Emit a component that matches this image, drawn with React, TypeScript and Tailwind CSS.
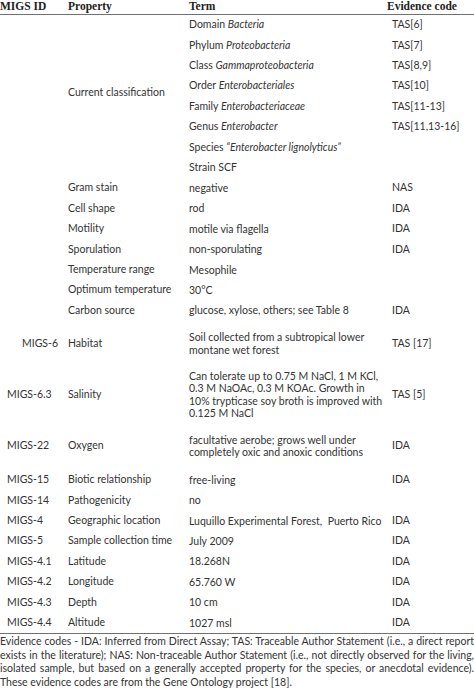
import type { ReactNode } from "react";

interface Row {
  id?: string;
  idIndent?: boolean;
  prop: string;
  term: ReactNode;
  code?: string;
  h: string;
}

const classification: { term: ReactNode; code?: string }[] = [
  { term: <>Domain <i>Bacteria</i></>, code: "TAS[6]" },
  { term: <>Phylum <i>Proteobacteria</i></>, code: "TAS[7]" },
  { term: <>Class <i>Gammaproteobacteria</i></>, code: "TAS[8,9]" },
  { term: <>Order <i>Enterobacteriales</i></>, code: "TAS[10]" },
  { term: <>Family <i>Enterobacteriaceae</i></>, code: "TAS[11-13]" },
  { term: <>Genus <i>Enterobacter</i></>, code: "TAS[11,13-16]" },
  { term: <>Species <i>“Enterobacter lignolyticus”</i></> },
  { term: <>Strain SCF</> },
];

const rows: Row[] = [
  { prop: "Gram stain", term: "negative", code: "NAS", h: "h-[20.4px]" },
  { prop: "Cell shape", term: "rod", code: "IDA", h: "h-[20.4px]" },
  { prop: "Motility", term: "motile via flagella", code: "IDA", h: "h-[20.4px]" },
  { prop: "Sporulation", term: "non-sporulating", code: "IDA", h: "h-[20.4px]" },
  { prop: "Temperature range", term: "Mesophile", h: "h-[20.4px]" },
  { prop: "Optimum temperature", term: "30°C", h: "h-[20.4px]" },
  { prop: "Carbon source", term: "glucose, xylose, others; see Table 8", code: "IDA", h: "h-[20.4px]" },
  {
    id: "MIGS-6",
    idIndent: true,
    prop: "Habitat",
    term: (
      <>
        Soil collected from a subtropical lower
        <br />
        montane wet forest
      </>
    ),
    code: "TAS [17]",
    h: "h-[46px]",
  },
  {
    id: "MIGS-6.3",
    prop: "Salinity",
    term: (
      <>
        Can tolerate up to 0.75 M NaCl, 1 M KCl,
        <br />
        0.3 M NaOAc, 0.3 M KOAc. Growth in
        <br />
        10% trypticase soy broth is improved with
        <br />
        0.125 M NaCl
      </>
    ),
    code: "TAS [5]",
    h: "h-[56px]",
  },
  {
    id: "MIGS-22",
    prop: "Oxygen",
    term: (
      <>
        facultative aerobe; grows well under
        <br />
        completely oxic and anoxic conditions
      </>
    ),
    code: "IDA",
    h: "h-[47px]",
  },
  { id: "MIGS-15", prop: "Biotic relationship", term: "free-living", code: "IDA", h: "h-[20.4px]" },
  { id: "MIGS-14", prop: "Pathogenicity", term: "no", h: "h-[20.4px]" },
  {
    id: "MIGS-4",
    prop: "Geographic location",
    term: <>Luquillo Experimental Forest,&nbsp; Puerto Rico</>,
    code: "IDA",
    h: "h-[20.4px]",
  },
  { id: "MIGS-5", prop: "Sample collection time", term: "July 2009", code: "IDA", h: "h-[20.4px]" },
  { id: "MIGS-4.1", prop: "Latitude", term: "18.268N", code: "IDA", h: "h-[20.4px]" },
  { id: "MIGS-4.2", prop: "Longitude", term: "65.760 W", code: "IDA", h: "h-[20.4px]" },
  { id: "MIGS-4.3", prop: "Depth", term: "10 cm", code: "IDA", h: "h-[20.4px]" },
  { id: "MIGS-4.4", prop: "Altitude", term: "1027 msl", code: "IDA", h: "h-[20.4px]" },
];

const footnote = [
  "Evidence codes - IDA: Inferred from Direct Assay; TAS: Traceable Author Statement (i.e., a direct report",
  "exists in the literature); NAS: Non-traceable Author Statement (i.e., not directly observed for the living,",
  "isolated sample, but based on a generally accepted property for the species, or anecdotal evidence).",
];

export default function App() {
  return (
    <div className="w-[474px] h-[690px] overflow-hidden bg-white text-[#333] text-[10.5px] font-['Lato','Open_Sans',sans-serif]">
      <div className="flex h-[15px] items-center border-b-[1.5px] border-[#707070] text-[11.5px] font-bold text-[#222] font-['Liberation_Serif','DejaVu_Serif',serif]">
        <div className="w-[68px]">MIGS ID</div>
        <div className="w-[121px]">Property</div>
        <div className="w-[198px]">Term</div>
        <div>Evidence code</div>
      </div>

      <div className="flex">
        <div className="w-[68px]" />
        <div className="flex w-[121px] items-center pb-[8px]">Current classification</div>
        <div className="flex flex-col">
          {classification.map((c, i) => (
            <div key={i} className="flex h-[20.4px] items-center">
              <div className="w-[198px] whitespace-nowrap">{c.term}</div>
              <div className="pl-[5px]">{c.code}</div>
            </div>
          ))}
        </div>
      </div>

      {rows.map((r, i) => (
        <div key={i} className={`flex items-center ${r.h}`}>
          <div className={`w-[68px] ${r.idIndent ? "pl-[22px]" : "pl-[7px]"}`}>{r.id}</div>
          <div className="w-[121px] whitespace-nowrap">{r.prop}</div>
          <div className="w-[198px] whitespace-nowrap leading-[12.5px]">{r.term}</div>
          <div className="pl-[5px]">{r.code}</div>
        </div>
      ))}

      <div className="border-t-[1.5px] border-[#707070] pt-px leading-[13.6px]">
        {footnote.map((l, i) => (
          <div key={i} className="whitespace-nowrap text-justify [text-align-last:justify]">
            {l}
          </div>
        ))}
        <div>These evidence codes are from the Gene Ontology project [18].</div>
      </div>
    </div>
  );
}
